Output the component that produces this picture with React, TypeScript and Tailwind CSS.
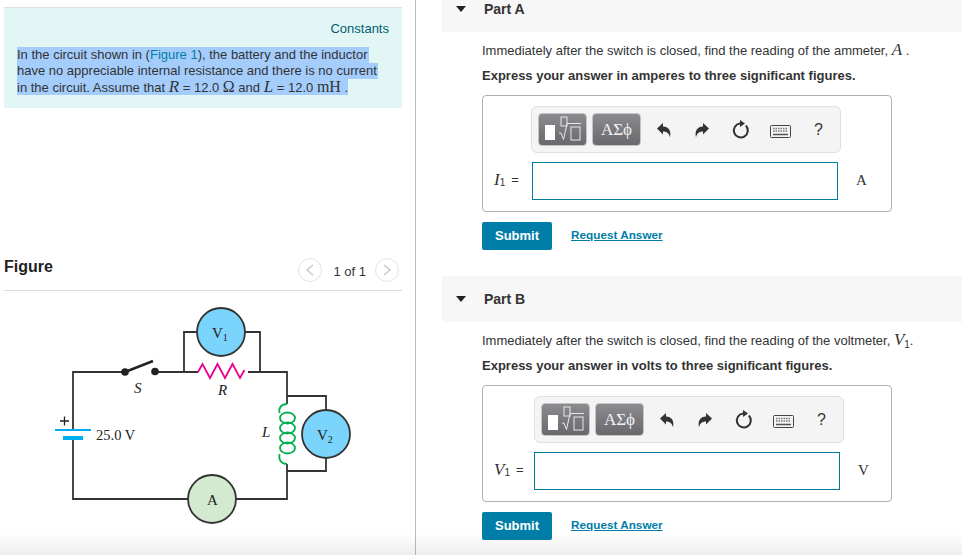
import React from 'react';

const sans = "font-['Liberation_Sans',Arial,sans-serif]";
const serif = "font-['Liberation_Serif','Times_New_Roman',serif]";

const Var = ({ children }: { children: React.ReactNode }) => (
  <i className={`${serif} text-[17px]`}>{children}</i>
);

const Undo = ({ flip }: { flip?: boolean }) => (
  <svg width="16" height="16" viewBox="0 0 16 16" className={flip ? '-scale-x-100' : ''}>
    <path d="M1 6.500 7 1V4.500C12.500 4.500 15.500 8.500 14 15.500 13.200 11.500 11 9.500 7 9.500V12.500Z" fill="#333" />
  </svg>
);

const Toolbar = () => (
  <div className="flex h-[47px] w-[310px] items-center rounded-md border border-[#e0e0e0] bg-[#f4f4f4] pl-[6px]">
    <div className="flex h-[33px] w-[49px] items-center justify-center rounded-[4px] border border-[#c4c4c4] bg-gradient-to-b from-[#8b8b90] to-[#69696d]">
      <svg width="38" height="27" viewBox="0 0 38 27">
        <rect x="1" y="9" width="10" height="15" fill="#fff" />
        <rect x="17" y="1" width="6" height="9" fill="none" stroke="#e8e8e8" />
        <path d="M15 17l2 0 2.500 6.500L23 7.500h14" fill="none" stroke="#e8e8e8" strokeWidth="1" />
        <rect x="27" y="11" width="9" height="13" fill="none" stroke="#e8e8e8" />
      </svg>
    </div>
    <div className={`${serif} ml-[5px] flex h-[33px] w-[49px] items-center justify-center rounded-[4px] border border-[#c4c4c4] bg-gradient-to-b from-[#8b8b90] to-[#69696d] text-[17px] text-[#f4f4f4]`}>
      ΑΣϕ
    </div>
    <div className="ml-[15px] flex w-[16px] justify-center"><Undo /></div>
    <div className="ml-[22px] flex w-[16px] justify-center"><Undo flip /></div>
    <svg width="18" height="20" viewBox="0 0 18 20" className="ml-[22px]">
      <path d="M13.800 5.500A7 7 0 1 1 8 3.500" fill="none" stroke="#333" strokeWidth="2" />
      <path d="M8 0 13 3.500 8 7Z" fill="#333" />
    </svg>
    <svg width="21" height="13" viewBox="0 0 21 13" className="ml-[20px] mt-[3px]">
      <rect x="0.500" y="0.500" width="20" height="12" rx="1" fill="#f4f4f4" stroke="#444" />
      <path d="M3 3.500h15M3 6h15" stroke="#777" strokeWidth="1.500" strokeDasharray="1.500 1" />
      <path d="M3 9.500h15" stroke="#555" strokeWidth="1.500" />
    </svg>
    <span className={`${sans} ml-[23px] text-[16px] text-[#333]`}>?</span>
  </div>
);

type PartProps = {
  title: string;
  question: React.ReactNode;
  hint: string;
  label: React.ReactNode;
  unit: string;
  inset: string;
  toolbarInset: string;
};

const Part = ({ title, question, hint, label, unit, inset, toolbarInset }: PartProps) => (
  <section className="h-[290px]">
    <div className="flex h-[46px] items-center bg-[#f7f7f7] pl-[14px]">
      <div className="h-0 w-0 border-x-[5.5px] border-t-[6px] border-x-transparent border-t-[#222]" />
      <h2 className="ml-[18px] text-[14px] font-bold text-[#333]">{title}</h2>
    </div>
    <div className="pl-[40px]">
      <p className="mt-[9px] h-[18px] text-[13px] leading-[18px] text-[#333]">{question}</p>
      <p className="mt-[8px] h-[18px] text-[13px] font-bold leading-[18px] text-[#333]">{hint}</p>
      <div className="mt-[10px] h-[117px] w-[410px] rounded-[4px] border border-[#b0b0b0] bg-white">
        <div className={`mt-[10px] ${toolbarInset}`}>
          <Toolbar />
        </div>
        <div className="mt-[9px] flex h-[38px] items-center pl-[11px]">
          <div className={`${inset} mb-[2px] flex items-center text-[#333]`}>{label}</div>
          <div className="h-[38px] w-[306px] border border-[#007c9f] bg-white" />
          <span className={`${serif} mb-[2px] ml-[18px] text-[15px] text-[#333]`}>{unit}</span>
        </div>
      </div>
      <div className="mt-[10px] flex items-center">
        <button className="h-[28px] w-[70px] rounded-[2px] bg-[#007ea8] text-[13px] font-bold text-white">Submit</button>
        <a className="mb-[2px] ml-[19px] text-[11.750px] font-bold text-[#007ea8] underline">Request Answer</a>
      </div>
    </div>
  </section>
);

const Circuit = () => (
  <svg width="398" height="250" viewBox="4 291 398 250" className="block">
    <g fill="none" stroke="#333" strokeWidth="1.800">
      <path d="M125 372H73V430M73 438V499H188M236 499H287V464M287 404V372H248M198 372H155" />
      <path d="M184 372V332H197M245 332H260V372" />
      <path d="M287 396H326V410M326 458V471H287" />
    </g>
    <path d="M125 372 153 361" stroke="#222" strokeWidth="2.500" />
    <circle cx="125" cy="372" r="3.800" fill="#222" />
    <circle cx="155" cy="371.500" r="3.800" fill="#222" />
    <path d="M198 372l4.500-8 7.500 14 7.500-14 7.500 14 7.500-14 7.500 14 4.500-8" fill="none" stroke="#ec008c" strokeWidth="1.800" />
    <path d="M55 430H91" stroke="#00aeef" strokeWidth="2" />
    <path d="M63 438H83" stroke="#00aeef" strokeWidth="4" />
    <path d="M60 421H69M64.500 416.500V425.500" stroke="#222" strokeWidth="1.300" />
    <g fill="none" stroke="#00b050" strokeWidth="1.800">
      <path d="M287 404C281 404 278.500 408 279.500 413M287 464C281 464 278.500 460 279.500 454" />
      <ellipse cx="287.500" cy="418" rx="7.500" ry="5.500" />
      <ellipse cx="287.500" cy="428" rx="7.500" ry="5.500" />
      <ellipse cx="287.500" cy="438" rx="7.500" ry="5.500" />
      <ellipse cx="287.500" cy="448" rx="7.500" ry="5.500" />
    </g>
    <g stroke="#333" strokeWidth="1.800">
      <circle cx="221" cy="332" r="24" fill="#7bd4fb" />
      <circle cx="326" cy="434" r="24" fill="#7bd4fb" />
      <circle cx="212" cy="499" r="24" fill="#d3e9d0" />
    </g>
    <g fontFamily="'Liberation Serif', serif" fill="#222" fontSize="15">
      <text x="212" y="338">V<tspan fontSize="10" dy="3">1</tspan></text>
      <text x="317" y="440">V<tspan fontSize="10" dy="3">2</tspan></text>
      <text x="207" y="505">A</text>
      <text x="96" y="440" fontSize="14.500">25.0 V</text>
      <text x="134" y="393" fontStyle="italic">S</text>
      <text x="218" y="395" fontStyle="italic">R</text>
      <text x="262" y="437" fontStyle="italic">L</text>
    </g>
  </svg>
);

const Arrow = ({ right }: { right?: boolean }) => (
  <div className="flex h-[24px] w-[24px] items-center justify-center rounded-full border border-[#e2e2e2] bg-white">
    <svg width="8" height="12" viewBox="0 0 8 12">
      <path d={right ? 'M1 1l6 5-6 5' : 'M7 1 1 6l6 5'} fill="none" stroke="#c4c4c4" strokeWidth="1.300" />
    </svg>
  </div>
);

const App: React.FC = () => {
  return (
    <div className={`${sans} relative flex h-[555px] w-[962px] overflow-hidden bg-white`}>
      {/* Left: statement and figure */}
      <aside className="h-full w-[416px] shrink-0 border-r border-[#b5bcc2] pl-[4px] pr-[13px] pt-[7px]">
        <div className="h-[101px] border-t border-[#e0e0e0] bg-[#e3f6f6] pl-[13px] pr-[13px] pt-[12px]">
          <div className="text-right text-[13px] leading-[18px] text-[#00606f]">Constants</div>
          <div className="mt-[9px] text-[13px] leading-[16px] text-[#333]">
            <div className="w-fit bg-[#a4cdfc] pr-[2px]">
              In the circuit shown in (<span className="text-[#007ea8]">Figure 1</span>), the battery and the inductor
            </div>
            <div className="w-fit bg-[#a4cdfc] pr-[1px]">have no appreciable internal resistance and there is no current</div>
            <div className="h-[16px] w-fit bg-[#a4cdfc]">
              in the circuit. Assume that <Var>R</Var> = 12.0 <span className={`${serif} text-[16px]`}>Ω</span> and <Var>L</Var> = 12.0 <span className={`${serif} text-[16px]`}>mH</span> .
            </div>
          </div>
        </div>

        <div className="mt-[146px] flex h-[37px] items-start justify-between border-b border-[#dcdcdc]">
          <h2 className="text-[16px] font-bold leading-[26px] text-[#222]">Figure</h2>
          <div className="flex items-center pr-[3px] pt-[4px]">
            <Arrow />
            <span className="ml-[11px] mr-[9px] mt-[3px] text-[13px] text-[#333]">1 of 1</span>
            <Arrow right />
          </div>
        </div>
        <Circuit />
      </aside>

      {/* Right: parts, scrolled a little */}
      <main className="-mt-[14px] flex-1 pl-[26px]">
        <Part
          title="Part A"
          question={<>Immediately after the switch is closed, find the reading of the ammeter, <Var>A</Var> .</>}
          hint="Express your answer in amperes to three significant figures."
          label={<><Var>I</Var><sub className="text-[10px]">1</sub><span className="ml-[6px] text-[13px]">=</span></>}
          unit="A"
          inset="w-[38px]"
          toolbarInset="ml-[48px]"
        />
        <Part
          title="Part B"
          question={<>Immediately after the switch is closed, find the reading of the voltmeter, <Var>V</Var><sub className="text-[10px]">1</sub>.</>}
          hint="Express your answer in volts to three significant figures."
          label={<><Var>V</Var><sub className="text-[10px]">1</sub><span className="ml-[6px] text-[13px]">=</span></>}
          unit="V"
          inset="w-[40px]"
          toolbarInset="ml-[51px]"
        />
      </main>

      {/* Fade at the bottom of the window */}
      <div className="pointer-events-none absolute inset-x-0 bottom-0 h-[22px] bg-gradient-to-b from-transparent to-[#00000012]" />
    </div>
  );
};

export default App;
